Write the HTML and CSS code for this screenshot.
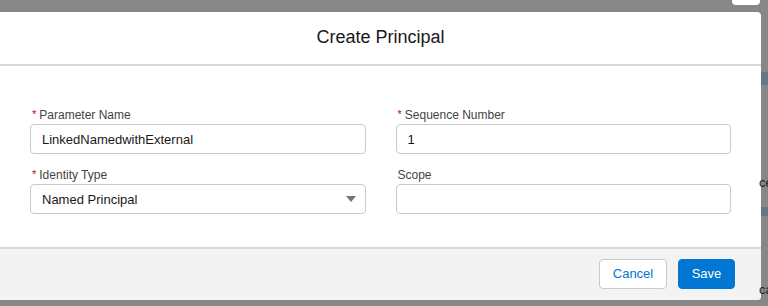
FILE: index.html
```html
<!DOCTYPE html>
<html lang="en">
<head>
    <meta charset="UTF-8">
    <meta name="viewport" content="width=device-width, initial-scale=1.0">
    <title>Create Principal</title>
    <link rel="stylesheet" href="styles.css">
</head>
<body>
    <!-- page behind the modal, only a sliver shows on the right -->
    <div class="page-behind">
        <div class="band band-top"></div>
        <div class="peek peek-1">ce</div>
        <div class="band band-mid"></div>
        <div class="peek peek-2">ca</div>
    </div>

    <button class="close-btn" aria-label="Close"></button>

    <div class="modal">
        <header class="modal-header">
            <h2>Create Principal</h2>
        </header>

        <div class="modal-body">
            <div class="form-grid">
                <div class="field">
                    <label><abbr class="required">*</abbr>Parameter Name</label>
                    <input type="text" class="text-input" value="LinkedNamedwithExternal">
                </div>
                <div class="field">
                    <label><abbr class="required">*</abbr>Sequence Number</label>
                    <input type="text" class="text-input" value="1">
                </div>
                <div class="field">
                    <label><abbr class="required">*</abbr>Identity Type</label>
                    <div class="select">
                        <span>Named Principal</span>
                        <svg class="select-arrow" width="10" height="6" viewBox="0 0 10 6">
                            <path d="M0 0 L10 0 L5 6 Z" fill="#747474"/>
                        </svg>
                    </div>
                </div>
                <div class="field">
                    <label>Scope</label>
                    <input type="text" class="text-input" value="">
                </div>
            </div>
        </div>

        <footer class="modal-footer">
            <button class="btn btn-neutral">Cancel</button>
            <button class="btn btn-brand">Save</button>
        </footer>
    </div>
</body>
</html>
```

FILE: styles.css
```css
* {
    margin: 0;
    padding: 0;
    box-sizing: border-box;
    font-family: 'Liberation Sans', Arial, sans-serif;
}

body {
    width: 768px;
    height: 306px;
    background-color: #878787;
    position: relative;
    overflow: hidden;
}

.page-behind {
    position: absolute;
    top: 0;
    left: 761px;
    right: 0;
    bottom: 0;
}

.band {
    position: absolute;
    left: 0;
    right: 0;
    background-color: #66768a;
}

.band-top {
    top: 72px;
    height: 13px;
}

.band-mid {
    top: 207px;
    height: 9px;
}

.peek {
    position: absolute;
    left: -2px;
    font-size: 13px;
    color: #222;
}

.peek-1 {
    top: 175px;
}

.peek-2 {
    top: 282px;
}

.close-btn {
    position: absolute;
    top: -20px;
    left: 732px;
    width: 28px;
    height: 25px;
    background: white;
    border: none;
    border-radius: 4px;
}

.modal {
    width: 761px;
    margin-top: 12px;
    background-color: white;
    border-radius: 0 4px 4px 0;
    overflow: hidden;
}

.modal-header {
    height: 54px;
    display: flex;
    align-items: center;
    justify-content: center;
    border-bottom: 2px solid #d8d8d8;
}

.modal-header h2 {
    font-size: 18px;
    font-weight: 400;
    color: #181818;
    padding-bottom: 2px;
}

.modal-body {
    padding: 40px 30px 33px;
}

.form-grid {
    display: grid;
    grid-template-columns: 1fr 1fr;
    column-gap: 30px;
    row-gap: 12px;
}

.field label {
    display: block;
    height: 18px;
    line-height: 18px;
    font-size: 12px;
    color: #444;
    padding-left: 2px;
}

.required {
    color: #ba0517;
    text-decoration: none;
    font-size: 11px;
    margin-right: 3px;
    position: relative;
    top: -1px;
}

.text-input,
.select {
    display: flex;
    align-items: center;
    width: 100%;
    height: 30px;
    border: 1px solid #c9c9c9;
    border-radius: 4px;
    padding: 0 11px;
    font-size: 13px;
    color: #181818;
    background: white;
}

.select {
    justify-content: space-between;
    padding-right: 9px;
}

.modal-footer {
    height: 53px;
    border-top: 2px solid #d8d8d8;
    background-color: #f3f3f3;
    display: flex;
    justify-content: flex-end;
    align-items: center;
    gap: 11px;
    padding: 0 26px 2px 0;
}

.btn {
    height: 30px;
    border-radius: 4px;
    font-size: 13px;
    cursor: pointer;
}

.btn-neutral {
    width: 68px;
    background: white;
    border: 1px solid #c9c9c9;
    color: #0176d3;
}

.btn-brand {
    width: 57px;
    background: #0176d3;
    border: 1px solid #0176d3;
    color: white;
}
```
